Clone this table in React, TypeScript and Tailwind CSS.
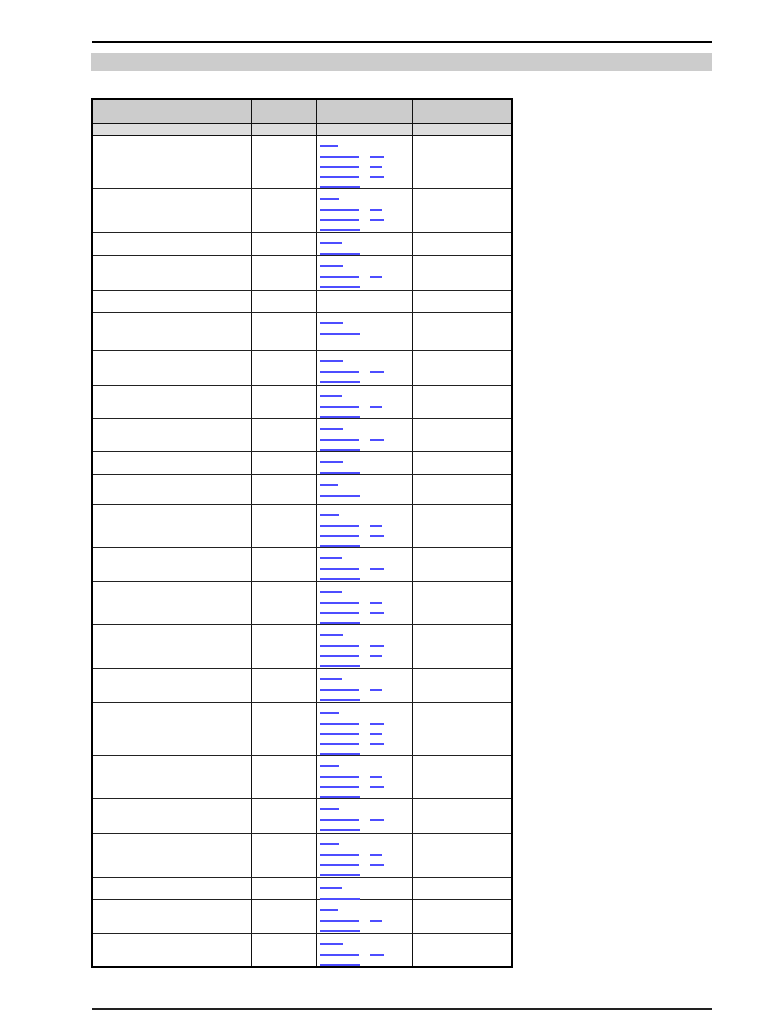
import React from 'react';

type Line = 'S' | 'LS' | 'L';

interface Row {
  h: string;
  first: string;
  lines: Line[];
}

// row heights and short-link widths read off the page
const rows: Row[] = [
  { h: 'h-[53px]', first: 'w-[18px]', lines: ['S', 'LS', 'LS', 'LS', 'L'] },
  { h: 'h-[44px]', first: 'w-[19px]', lines: ['S', 'LS', 'LS', 'L'] },
  { h: 'h-[23px]', first: 'w-[22px]', lines: ['S', 'L'] },
  { h: 'h-[35px]', first: 'w-[23px]', lines: ['S', 'LS', 'L'] },
  { h: 'h-[22px]', first: 'w-[20px]', lines: [] },
  { h: 'h-[38px]', first: 'w-[23px]', lines: ['S', 'L'] },
  { h: 'h-[35px]', first: 'w-[23px]', lines: ['S', 'LS', 'L'] },
  { h: 'h-[33px]', first: 'w-[22px]', lines: ['S', 'LS', 'L'] },
  { h: 'h-[33px]', first: 'w-[23px]', lines: ['S', 'LS', 'L'] },
  { h: 'h-[23px]', first: 'w-[23px]', lines: ['S', 'L'] },
  { h: 'h-[30px]', first: 'w-[18px]', lines: ['S', 'L'] },
  { h: 'h-[43px]', first: 'w-[19px]', lines: ['S', 'LS', 'LS', 'L'] },
  { h: 'h-[34px]', first: 'w-[22px]', lines: ['S', 'LS', 'L'] },
  { h: 'h-[43px]', first: 'w-[22px]', lines: ['S', 'LS', 'LS', 'L'] },
  { h: 'h-[44px]', first: 'w-[23px]', lines: ['S', 'LS', 'LS', 'L'] },
  { h: 'h-[34px]', first: 'w-[22px]', lines: ['S', 'LS', 'L'] },
  { h: 'h-[53px]', first: 'w-[19px]', lines: ['S', 'LS', 'LS', 'LS', 'L'] },
  { h: 'h-[43px]', first: 'w-[19px]', lines: ['S', 'LS', 'LS', 'L'] },
  { h: 'h-[35px]', first: 'w-[19px]', lines: ['S', 'LS', 'L'] },
  { h: 'h-[44px]', first: 'w-[19px]', lines: ['S', 'LS', 'LS', 'L'] },
  { h: 'h-[22px]', first: 'w-[22px]', lines: ['S', 'L'] },
  { h: 'h-[34px]', first: 'w-[18px]', lines: ['S', 'LS', 'L'] },
  { h: 'h-[32px]', first: 'w-[23px]', lines: ['S', 'LS', 'L'] },
];

const Link: React.FC<{ w: string; className?: string }> = ({ w, className = '' }) => (
  <a href="#" className={`block h-[2px] bg-[#4d4dff] ${w} ${className}`}>
    <span className="sr-only">&nbsp;</span>
  </a>
);

const LinkLine: React.FC<{ kind: Line; first: string; idx: number }> = ({ kind, first, idx }) => (
  <div className="flex h-[10.25px] items-end">
    {kind === 'S' && <Link w={first} />}
    {kind === 'LS' && (
      <>
        <Link w="w-[39px]" />
        <Link w={idx % 2 ? 'w-[14px]' : 'w-[12px]'} className="ml-[11px]" />
      </>
    )}
    {kind === 'L' && <Link w="w-[40px]" />}
  </div>
);

const cols = 'grid grid-cols-[159px_65px_96px_98px]';
const cell = 'border-r border-[#111]';

export default function App() {
  return (
    <div className="min-h-[1024px] w-[768px] bg-white pt-[41px] font-['Liberation_Sans',Arial,sans-serif]">
      <div className="ml-[92px] h-[2px] w-[620px] bg-black" />
      <div className="ml-[91px] mt-[10px] h-[18px] w-[621px] bg-[#cccccc]" />

      <div className="ml-[91px] mt-[27px] w-[422px] border-2 border-black">
        <div className={`${cols} h-[24px] border-b border-[#111] bg-[#cccccc]`}>
          <div className={cell} />
          <div className={cell} />
          <div className={cell} />
          <div />
        </div>
        <div className={`${cols} h-[12px] border-b border-[#111] bg-[#dddddd]`}>
          <div className={cell} />
          <div className={cell} />
          <div className={cell} />
          <div />
        </div>
        {rows.map((r, i) => (
          <div
            key={i}
            className={`${cols} ${r.h} ${i < rows.length - 1 ? 'border-b border-[#222]' : ''}`}
          >
            <div className={cell} />
            <div className={cell} />
            <div className={`${cell} pl-[3px] pt-px`}>
              {r.lines.map((l, j) => (
                <LinkLine key={j} kind={l} first={r.first} idx={i + j} />
              ))}
            </div>
            <div />
          </div>
        ))}
      </div>

      <div className="ml-[92px] mt-[40px] h-[1.5px] w-[620px] bg-[#222]" />
    </div>
  );
}
